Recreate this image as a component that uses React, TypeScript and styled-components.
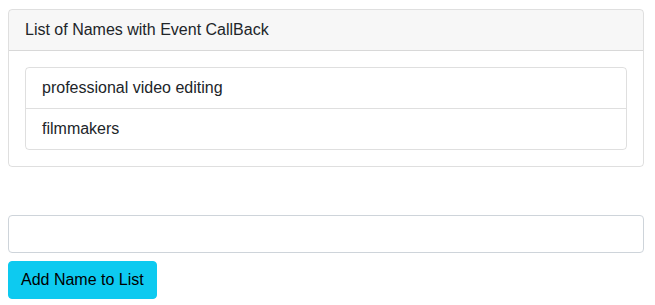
import React, { useState } from 'react';
import styled, { createGlobalStyle } from 'styled-components';

const GlobalStyle = createGlobalStyle`
  * {
    box-sizing: border-box;
  }

  body {
    margin: 8px;
    background: #fff;
    color: #212529;
    font-family: 'Liberation Sans', Arial, sans-serif;
    font-size: 16px;
    line-height: 1.5;
  }
`;

export default function App() {
  const [names, setNames] = useState<string[]>(['professional video editing', 'filmmakers']);
  const [value, setValue] = useState('');

  const addName = () => {
    if (!value.trim()) return;
    setNames([...names, value.trim()]);
    setValue('');
  };

  return (
    <>
      <GlobalStyle />
      <Page>
        <Card>
          <CardHeader>List of Names with Event CallBack</CardHeader>
          <CardBody>
            <ListGroup>
              {names.map((name, index) => (
                <ListItem key={index}>{name}</ListItem>
              ))}
            </ListGroup>
          </CardBody>
        </Card>
        <Input value={value} onChange={(e) => setValue(e.target.value)} />
        <Button onClick={addName}>Add Name to List</Button>
      </Page>
    </>
  );
}

const Page = styled.div`
  display: flex;
  flex-direction: column;
  align-items: flex-start;
  padding: 1px 3px 0 0;
`;

const Card = styled.div`
  width: 100%;
  border: 1px solid rgba(0, 0, 0, 0.125);
  border-radius: 4px;
  overflow: hidden;
  margin-bottom: 48px;
`;

const CardHeader = styled.div`
  padding: 8px 16px;
  background: rgba(0, 0, 0, 0.03);
  border-bottom: 1px solid rgba(0, 0, 0, 0.125);
`;

const CardBody = styled.div`
  padding: 16px;
`;

const ListGroup = styled.ul`
  margin: 0;
  padding: 0;
  list-style: none;
  border: 1px solid rgba(0, 0, 0, 0.125);
  border-radius: 4px;
`;

const ListItem = styled.li`
  padding: 8px 16px;

  & + & {
    border-top: 1px solid rgba(0, 0, 0, 0.125);
  }
`;

const Input = styled.input`
  width: 100%;
  height: 38px;
  padding: 6px 12px;
  font: inherit;
  color: #212529;
  border: 1px solid #ced4da;
  border-radius: 4px;
  outline: none;
  margin-bottom: 8px;
`;

const Button = styled.button`
  padding: 6px 12px;
  font: inherit;
  line-height: 1.5;
  color: #000;
  background: #0dcaf0;
  border: 1px solid #0dcaf0;
  border-radius: 4px;
  cursor: pointer;
`;
